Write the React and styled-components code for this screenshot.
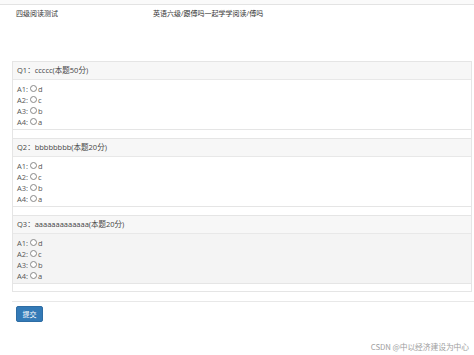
import React from 'react';
import styled, { createGlobalStyle } from 'styled-components';

const questions = [
  { no: 'Q1', title: 'ccccc', score: 50, options: ['d', 'c', 'b', 'a'] },
  { no: 'Q2', title: 'bbbbbbbb', score: 20, options: ['d', 'c', 'b', 'a'] },
  { no: 'Q3', title: 'aaaaaaaaaaaaa', score: 20, options: ['d', 'c', 'b', 'a'], active: true },
];

const GlobalStyle = createGlobalStyle`
  html, body {
    margin: 0;
    padding: 0;
    background: #fff;
    font-family: "Open Sans", "Noto Sans CJK SC", sans-serif;
  }
`;

const App = () => (
  <Page>
    <GlobalStyle />
    <TopStrip />
    <InfoRow>
      <InfoCell width="137px">四级阅读测试</InfoCell>
      <InfoCell>英语六级/跟傅吗一起学学阅读/傅吗</InfoCell>
    </InfoRow>

    <QuestionBox>
      {questions.map((q) => (
        <Panel key={q.no}>
          <PanelHeading>
            {q.no}：{q.title}(本题{q.score}分)
          </PanelHeading>
          <PanelBody active={q.active}>
            {q.options.map((opt, i) => (
              <Option key={i}>
                A{i + 1}:<Radio />
                {opt}
              </Option>
            ))}
          </PanelBody>
        </Panel>
      ))}
    </QuestionBox>

    <Footer>
      <SubmitButton>提交</SubmitButton>
    </Footer>

    <Watermark>CSDN @中以经济建设为中心</Watermark>
  </Page>
);

export default App;

const Page = styled.div`
  position: relative;
  width: 474px;
  height: 355px;
  overflow: hidden;
`;

const TopStrip = styled.div`
  height: 4px;
  background: #fafafa;
  border-bottom: 1px solid #e3e3e3;
`;

const InfoRow = styled.div`
  display: flex;
  padding: 4px 0 0 16px;
  height: 18px;
  font-size: 7px;
  line-height: 10px;
  color: #333;
`;

const InfoCell = styled.div`
  width: ${(p) => p.width || 'auto'};
`;

const QuestionBox = styled.div`
  margin: 34px 2px 0 12px;
  padding-bottom: 7px;
  border: 1px solid #e5e5e5;
  border-top: none;
  display: flex;
  flex-direction: column;
  gap: 8px;
`;

const Panel = styled.div`
  border-top: 1px solid #e5e5e5;
`;

const PanelHeading = styled.div`
  height: 17px;
  line-height: 17px;
  padding-left: 4px;
  background: #f7f7f7;
  border-bottom: 1px solid #e8e8e8;
  font-size: 7.5px;
  color: #444;
`;

const PanelBody = styled.div`
  height: 45px;
  padding: 3px 0 1px 4px;
  background: ${(p) => (p.active ? '#f4f4f4' : '#fff')};
  border-bottom: 1px solid #e5e5e5;
`;

const Option = styled.div`
  display: flex;
  align-items: center;
  height: 11px;
  font-size: 7.5px;
  color: #555;
`;

const Radio = styled.span`
  display: inline-block;
  width: 5px;
  height: 5px;
  margin: 0 1px 0 2px;
  border: 1px solid #888;
  border-radius: 50%;
  background: #fff;
`;

const Footer = styled.div`
  display: flex;
  margin: 9px 0 0 12px;
  padding: 4px 0 0 4px;
  border-top: 1px solid #e8e8e8;
`;

const SubmitButton = styled.button`
  width: 27px;
  height: 16px;
  padding: 0;
  border: 1px solid #2e6da4;
  border-radius: 2px;
  background: #337ab7;
  color: #fff;
  font-family: "Noto Sans CJK SC", sans-serif;
  font-size: 7px;
  line-height: 14px;
`;

const Watermark = styled.div`
  position: absolute;
  right: 5px;
  bottom: 3px;
  font-family: "Noto Sans CJK SC", sans-serif;
  font-size: 7.8px;
  color: #a0a0a0;
  letter-spacing: -0.1px;
`;
